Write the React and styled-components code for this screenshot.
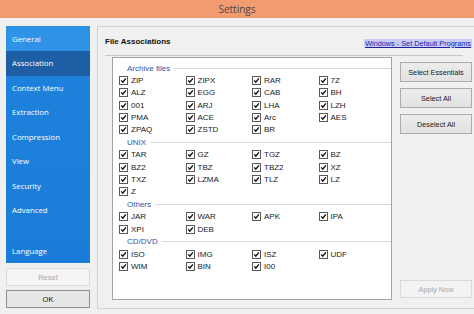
import React from "react";
import styled, { createGlobalStyle } from "styled-components";

const Global = createGlobalStyle`
  html, body { margin: 0; padding: 0; background: #f0f0f0; }
  body { overflow: hidden; }
  * { box-sizing: border-box; }
`;

const Window = styled.div`
  width: 474px;
  height: 314px;
  background: #f0f0f0;
  overflow: hidden;
  display: flex;
  flex-direction: column;
  font-family: "Liberation Sans", Arial, sans-serif;
`;

const TitleBar = styled.div`
  height: 18px;
  background: #f29a70;
  display: flex;
  align-items: center;
  justify-content: center;
  font-family: "Open Sans", "Noto Sans", sans-serif;
  font-size: 10px;
  color: #4f4540;
`;

const Body = styled.div`
  flex: 1;
  display: flex;
  gap: 7px;
  padding: 8px 0 0 6px;
`;

const Sidebar = styled.div`
  width: 84px;
  display: flex;
  flex-direction: column;
`;

const Nav = styled.div`
  height: 237px;
  background: linear-gradient(180deg, #1f83dc 0%, #1a7cd8 100%);
  display: flex;
  flex-direction: column;
`;

const NavItem = styled.div`
  height: ${(p) => (p.$first ? 25 : 24.5)}px;
  flex: none;
  display: flex;
  align-items: center;
  padding-left: 6px;
  font-family: "Open Sans", "Noto Sans", sans-serif;
  font-size: 7.8px;
  color: #ffffff;
  background: ${(p) => (p.$active ? "#1d5ea4" : p.$hover ? "#2e92e6" : "transparent")};
  margin-top: ${(p) => (p.$bottom ? "auto" : "0")};
`;

const SideButton = styled.div`
  height: 18px;
  margin-top: ${(p) => p.$mt}px;
  display: flex;
  align-items: center;
  justify-content: center;
  font-size: 7.5px;
  background: ${(p) => (p.$disabled ? "#f4f4f4" : "#e6e6e6")};
  border: 1px solid ${(p) => (p.$disabled ? "#dadada" : "#8f8f8f")};
  color: ${(p) => (p.$disabled ? "#a8a8a8" : "#111")};
`;

const Main = styled.div`
  flex: 1;
  height: 283px;
  border: 1px solid #d2d2d2;
  border-right: none;
  background: #f0f0f0;
  padding: 0 2px 0 7px;
  display: flex;
  flex-direction: column;
`;

const Header = styled.div`
  height: 28px;
  display: flex;
  align-items: center;
  justify-content: space-between;
`;

const HeaderTitle = styled.div`
  font-weight: bold;
  font-size: 8px;
  color: #111;
`;

const Link = styled.span`
  margin-top: 4px;
  font-size: 7.3px;
  color: #2121a8;
  text-decoration: underline;
  background: #c9cdf6;
  padding: 0 1px;
`;

const Separator = styled.div`
  height: 1px;
  background: #c6c6c6;
  margin-right: 9px;
`;

const Content = styled.div`
  margin-top: 1px;
  display: flex;
  gap: 8px;
`;

const GroupBox = styled.div`
  margin-left: 7px;
  width: 280px;
  height: 243px;
  background: #ffffff;
  border: 1px solid #a3a3a3;
  padding-top: 3.5px;
`;

const LegendRow = styled.div`
  height: 13px;
  display: flex;
  align-items: center;
  padding-left: 14px;
`;

const LegendText = styled.span`
  font-size: 8px;
  color: #3552a6;
`;

const LegendLine = styled.div`
  flex: 1;
  height: 1px;
  background: #d6dbe3;
  margin-left: 4px;
`;

const Grid = styled.div`
  display: grid;
  grid-template-columns: repeat(4, 66.5px);
  grid-auto-rows: 12.25px;
  padding-left: 6px;
`;

const Item = styled.div`
  display: flex;
  align-items: center;
  gap: 3px;
  font-size: 8px;
  color: #1a1a1a;
`;

const Box = styled.span`
  width: 9px;
  height: 9px;
  border: 1px solid #5a5a5a;
  background: #fff;
  display: inline-flex;
  flex: none;
`;

const Buttons = styled.div`
  width: 72px;
  height: 243px;
  display: flex;
  flex-direction: column;
  gap: 6px;
  padding-top: 5px;
  padding-bottom: 2px;
`;

const Button = styled.div`
  height: ${(p) => p.$h || 20}px;
  flex: none;
  display: flex;
  align-items: center;
  justify-content: center;
  font-size: 7.3px;
  background: ${(p) => (p.$disabled ? "#f3f3f3" : "linear-gradient(180deg, #ececec, #e2e2e2)")};
  border: 1px solid ${(p) => (p.$disabled ? "#d9d9d9" : "#acacac")};
  color: ${(p) => (p.$disabled ? "#a8a8a8" : "#1a1a1a")};
  margin-top: ${(p) => (p.$bottom ? "auto" : "0")};
`;

function Check({ label }) {
  return (
    <Item>
      <Box>
        <svg width="7" height="7" viewBox="0 0 7 7">
          <path d="M1.2 3.4 L2.8 5.2 L5.9 1.4" fill="none" stroke="#111" strokeWidth="1.4" />
        </svg>
      </Box>
      {label}
    </Item>
  );
}

const groups = [
  {
    title: "Archive files",
    items: ["ZIP", "ZIPX", "RAR", "7Z", "ALZ", "EGG", "CAB", "BH", "001", "ARJ", "LHA", "LZH", "PMA", "ACE", "Arc", "AES", "ZPAQ", "ZSTD", "BR"],
  },
  {
    title: "UNIX",
    items: ["TAR", "GZ", "TGZ", "BZ", "BZ2", "TBZ", "TBZ2", "XZ", "TXZ", "LZMA", "TLZ", "LZ", "Z"],
  },
  { title: "Others", items: ["JAR", "WAR", "APK", "IPA", "XPI", "DEB"] },
  { title: "CD/DVD", items: ["ISO", "IMG", "ISZ", "UDF", "WIM", "BIN", "I00"] },
];

const navItems = ["General", "Association", "Context Menu", "Extraction", "Compression", "View", "Security", "Advanced"];

export default function App() {
  return (
    <Window>
      <Global />
      <TitleBar>Settings</TitleBar>
      <Body>
        <Sidebar>
          <Nav>
            {navItems.map((n, i) => (
              <NavItem key={n} $first={i === 0} $hover={i === 0} $active={n === "Association"}>
                {n}
              </NavItem>
            ))}
            <NavItem $bottom>Language</NavItem>
          </Nav>
          <SideButton $mt={5} $disabled>Reset</SideButton>
          <SideButton $mt={4}>OK</SideButton>
        </Sidebar>
        <Main>
          <Header>
            <HeaderTitle>File Associations</HeaderTitle>
            <Link>Windows - Set Default Programs</Link>
          </Header>
          <Separator />
          <Content>
            <GroupBox>
              {groups.map((g) => (
                <div key={g.title}>
                  <LegendRow>
                    <LegendText>{g.title}</LegendText>
                    <LegendLine />
                  </LegendRow>
                  <Grid>
                    {g.items.map((it) => (
                      <Check key={it} label={it} />
                    ))}
                  </Grid>
                </div>
              ))}
            </GroupBox>
            <Buttons>
              <Button>Select Essentials</Button>
              <Button>Select All</Button>
              <Button>Deselect All</Button>
              <Button $bottom $disabled $h={18}>Apply Now</Button>
            </Buttons>
          </Content>
        </Main>
      </Body>
    </Window>
  );
}
